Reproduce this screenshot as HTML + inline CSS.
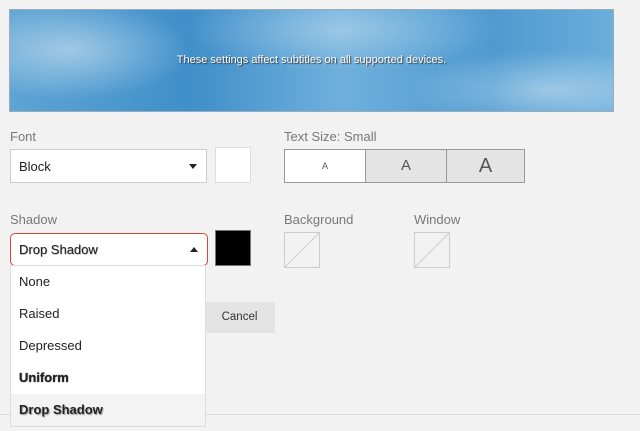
<!DOCTYPE html><html><head><style>
body{margin:0;width:640px;height:431px;background:#f2f2f2;font-family:"Liberation Sans",sans-serif;position:relative;overflow:hidden}
.a{position:absolute;box-sizing:border-box}
.lbl{color:#777;font-size:13px}
</style></head><body>
<div class="a" style="left:9px;top:9px;width:605px;height:103px;border:1px solid #9ab;background:radial-gradient(ellipse 120px 50px at 60px 40px,rgba(255,255,255,.45),transparent),radial-gradient(ellipse 140px 40px at 540px 80px,rgba(255,255,255,.4),transparent),radial-gradient(ellipse 160px 40px at 330px 20px,rgba(255,255,255,.3),transparent),linear-gradient(90deg,#5ea4d4,#3f8fca 30%,#6fb0dc 55%,#4e9ad0 80%,#6aaedb);"></div>
<div class="a" style="left:9px;top:54px;width:605px;text-align:center;color:#fff;font-size:11px;text-shadow:1px 1px 1px #333">These settings affect subtitles on all supported devices.</div>
<div class="a lbl" style="left:10px;top:129px">Font</div>
<div class="a" style="left:10px;top:149px;width:197px;height:34px;background:#fff;border:1px solid #ccc;font-size:13px;padding:9px 8px;color:#222">Block<span style="position:absolute;right:9px;top:14px;border:4px solid transparent;border-top:5px solid #222;border-bottom:0"></span></div>
<div class="a" style="left:215px;top:147px;width:36px;height:36px;background:#fff;border:1px solid #ddd"></div>
<div class="a lbl" style="left:284px;top:129px">Text Size: Small</div>
<div class="a" style="left:284px;top:149px;width:241px;height:34px;border:1px solid #999;display:flex;background:#e4e4e4;color:#555">
<div style="width:80px;background:#fff;text-align:center;font-size:9px;line-height:32px">A</div>
<div style="width:80px;border-left:1px solid #999;text-align:center;font-size:15px;line-height:32px">A</div>
<div style="flex:1;border-left:1px solid #999;text-align:center;font-size:20px;line-height:32px">A</div></div>
<div class="a lbl" style="left:10px;top:212px">Shadow</div>
<div class="a" style="left:10px;top:233px;width:198px;height:33px;background:#fff;border:1.5px solid #d9453c;border-radius:5px;font-size:13px;padding:8px 8px;color:#222;text-shadow:0.5px 0.5px 0.5px #888">Drop Shadow<span style="position:absolute;right:9px;top:13px;border:4px solid transparent;border-bottom:5px solid #222;border-top:0"></span></div>
<div class="a" style="left:215px;top:230px;width:36px;height:36px;background:#000;border:1px solid #777"></div>
<div class="a lbl" style="left:284px;top:212px">Background</div>
<div class="a lbl" style="left:414px;top:212px">Window</div>
<svg class="a" style="left:284px;top:232px" width="36" height="36"><rect x=".5" y=".5" width="35" height="35" fill="none" stroke="#ccc"/><line x1="1" y1="35" x2="35" y2="1" stroke="#ccc"/></svg>
<svg class="a" style="left:414px;top:232px" width="36" height="36"><rect x=".5" y=".5" width="35" height="35" fill="none" stroke="#ccc"/><line x1="1" y1="35" x2="35" y2="1" stroke="#ccc"/></svg>
<div class="a" style="left:0;top:414px;width:640px;height:1px;background:#ddd"></div>
<div class="a" style="left:200px;top:302px;width:75px;height:31px;background:#e4e4e4;font-size:11.5px;color:#333;text-align:center;line-height:31px;padding-left:4px">Cancel</div>
<div class="a" style="left:10px;top:265px;width:196px;height:162px;background:#fff;border:1px solid #ddd;font-size:13px;color:#222">
<div style="height:32px;line-height:32px;padding-left:8px">None</div>
<div style="height:32px;line-height:32px;padding-left:8px">Raised</div>
<div style="height:32px;line-height:32px;padding-left:8px">Depressed</div>
<div style="height:32px;line-height:32px;padding-left:8px;font-weight:bold;text-shadow:0 0 1px #000">Uniform</div>
<div style="height:32px;line-height:32px;padding-left:8px;background:#f3f3f3;text-shadow:1px 1px 1px #999;font-weight:bold">Drop Shadow</div>
</div>
</body></html>
